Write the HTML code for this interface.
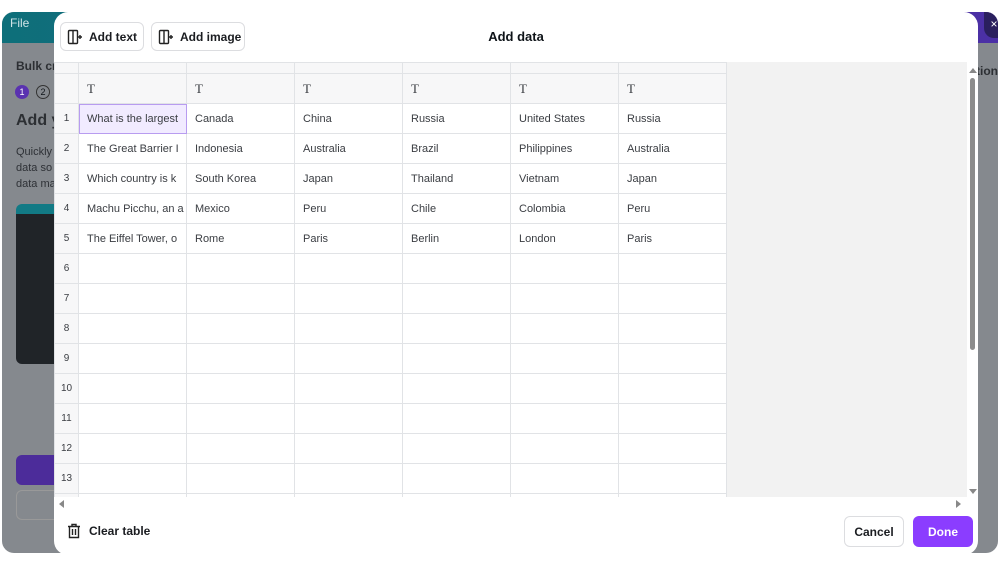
<!DOCTYPE html>
<html><head><style>
*{box-sizing:border-box;margin:0;padding:0}
body{width:1000px;height:563px;background:#fff;position:relative;overflow:hidden;font-family:"Liberation Sans",sans-serif;color:#0e1318}
.bg{position:absolute;left:2px;top:12px;width:996px;height:541px;border-radius:12px;background:#85898e;overflow:hidden}
.bar{position:absolute;left:0;top:0;width:996px;height:31px;background:linear-gradient(90deg,#0e6f7a,#1a6a80 40%,#4a3a9a 80%,#4b2fa6)}
.t{position:absolute;color:#2c2f33;font-size:12px;font-weight:bold}
.modal{position:absolute;left:54px;top:12px;width:924px;height:543px;background:#fff;border-radius:14px;overflow:hidden}
.btn{position:absolute;top:10px;height:29px;border:1px solid #dcdde0;border-radius:6px;font-size:12px;font-weight:bold;display:flex;align-items:center;padding-left:6px;gap:6px;color:#1b1d21}
.title{position:absolute;left:0;width:924px;top:17px;text-align:center;font-size:13px;font-weight:bold}
.grid{position:absolute;left:0;top:50px;width:913px;height:435px;background:#f2f2f2;overflow:hidden}
table{border-collapse:collapse;background:#fff;font-size:11px;color:#3a3d42}
td{border:1px solid #e1e3e6;height:30px;padding:0 8px;white-space:nowrap;overflow:hidden;max-width:108px;width:108px}
td.n{width:24px;max-width:24px;background:#f7f7f8;text-align:center;padding:0;font-size:10px}
tr.h0 td{height:11px;background:#f7f7f8}
tr.h td{background:#f7f7f8;font-family:"Liberation Serif",serif;font-size:13px;height:30px}
td.sel{background:#f1ebff;outline:1px solid #b89cf0;outline-offset:-1px}
.vs{position:absolute;left:913px;top:50px;width:11px;height:450px;background:#fff}
.hs{position:absolute;left:0;top:485px;width:913px;height:14px;background:#fff}
.foot{position:absolute;top:504px;height:31px;border-radius:6px;font-size:12px;font-weight:bold;display:flex;align-items:center;justify-content:center}
</style></head><body>
<div class="bg"><div class="bar"></div>
<div class="t" style="left:8px;top:4px;color:#cfe3e6;font-weight:normal">File</div>
<div class="t" style="left:14px;top:47px">Bulk cre</div>
<div style="position:absolute;left:13px;top:73px;width:14px;height:14px;border-radius:50%;background:#5a32b0;color:#fff;font-size:9px;text-align:center;line-height:14px">1</div>
<div style="position:absolute;left:34px;top:73px;width:14px;height:14px;border-radius:50%;border:1px solid #333;font-size:9px;text-align:center;line-height:12px">2</div>
<div class="t" style="left:14px;top:100px;font-size:16px">Add y</div>
<div class="t" style="left:14px;top:132px;font-weight:normal;font-size:11px;line-height:16px;color:#2e3136">Quickly<br>data so<br>data ma</div>
<div style="position:absolute;left:14px;top:192px;width:60px;height:160px;border-radius:6px;background:#202428;border-top:10px solid #127a85"></div>
<div style="position:absolute;left:14px;top:443px;width:60px;height:30px;border-radius:6px;background:#4c2c9a"></div>
<div style="position:absolute;left:14px;top:478px;width:60px;height:30px;border-radius:6px;border:1px solid #999"></div>
<div class="t" style="left:974px;top:52px">tion</div>
<div style="position:absolute;left:982px;top:0;width:20px;height:26px;background:#2a1f5e;color:#fff;font-size:12px;text-align:center;line-height:24px;border-radius:0 0 0 10px">×</div>
</div>
<div class="modal">
<div class="btn" style="left:6px;width:84px"><svg width="16" height="16" viewBox="0 0 16 16" fill="none" stroke="#222" stroke-width="1.4"><rect x="1.5" y="1.5" width="9" height="13" rx="1"/><path d="M6 1.5v13M11 8h4M13 6v4"/></svg>Add text</div>
<div class="btn" style="left:97px;width:94px"><svg width="16" height="16" viewBox="0 0 16 16" fill="none" stroke="#222" stroke-width="1.4"><rect x="1.5" y="1.5" width="9" height="13" rx="1"/><path d="M6 1.5v13M11 8h4M13 6v4"/></svg>Add image</div>
<div class="title">Add data</div>
<div class="grid"><table>
<tr class="h0"><td class="n"></td><td></td><td></td><td></td><td></td><td></td><td></td></tr>
<tr class="h"><td class="n"></td><td>T</td><td>T</td><td>T</td><td>T</td><td>T</td><td>T</td></tr>
<tr><td class="n">1</td><td class="sel">What is the largest</td><td>Canada</td><td>China</td><td>Russia</td><td>United States</td><td>Russia</td></tr>
<tr><td class="n">2</td><td>The Great Barrier I</td><td>Indonesia</td><td>Australia</td><td>Brazil</td><td>Philippines</td><td>Australia</td></tr>
<tr><td class="n">3</td><td>Which country is k</td><td>South Korea</td><td>Japan</td><td>Thailand</td><td>Vietnam</td><td>Japan</td></tr>
<tr><td class="n">4</td><td>Machu Picchu, an a</td><td>Mexico</td><td>Peru</td><td>Chile</td><td>Colombia</td><td>Peru</td></tr>
<tr><td class="n">5</td><td>The Eiffel Tower, o</td><td>Rome</td><td>Paris</td><td>Berlin</td><td>London</td><td>Paris</td></tr>
<tr><td class="n">6</td><td></td><td></td><td></td><td></td><td></td><td></td></tr>
<tr><td class="n">7</td><td></td><td></td><td></td><td></td><td></td><td></td></tr>
<tr><td class="n">8</td><td></td><td></td><td></td><td></td><td></td><td></td></tr>
<tr><td class="n">9</td><td></td><td></td><td></td><td></td><td></td><td></td></tr>
<tr><td class="n">10</td><td></td><td></td><td></td><td></td><td></td><td></td></tr>
<tr><td class="n">11</td><td></td><td></td><td></td><td></td><td></td><td></td></tr>
<tr><td class="n">12</td><td></td><td></td><td></td><td></td><td></td><td></td></tr>
<tr><td class="n">13</td><td></td><td></td><td></td><td></td><td></td><td></td></tr>
<tr><td class="n">14</td><td></td><td></td><td></td><td></td><td></td><td></td></tr>
</table></div>
<div class="vs"><div style="position:absolute;left:2px;top:6px;border:4px solid transparent;border-bottom:5px solid #888;border-top:0"></div><div style="position:absolute;left:3px;top:16px;width:5px;height:272px;background:#8c8c8c;border-radius:3px"></div><div style="position:absolute;left:2px;top:427px;border:4px solid transparent;border-top:5px solid #888;border-bottom:0"></div></div>
<div class="hs"><div style="position:absolute;left:5px;top:3px;border:4px solid transparent;border-right:5px solid #888;border-left:0"></div><div style="position:absolute;left:902px;top:3px;border:4px solid transparent;border-left:5px solid #888;border-right:0"></div></div>
<div style="position:absolute;left:13px;top:511px;display:flex;align-items:center;gap:8px;font-size:12px;font-weight:bold;color:#1b1d21"><svg width="14" height="16" viewBox="0 0 14 16" fill="none" stroke="#222" stroke-width="1.4"><path d="M1 3.5h12M5 3.5V1.5h4v2M2.5 3.5v11h9v-11M5.5 6v6M8.5 6v6"/></svg>Clear table</div>
<div class="foot" style="left:790px;width:60px;border:1px solid #dcdde0;color:#1b1d21">Cancel</div>
<div class="foot" style="left:859px;width:60px;background:#8b3dff;color:#fff">Done</div>
</div>
</body></html>
